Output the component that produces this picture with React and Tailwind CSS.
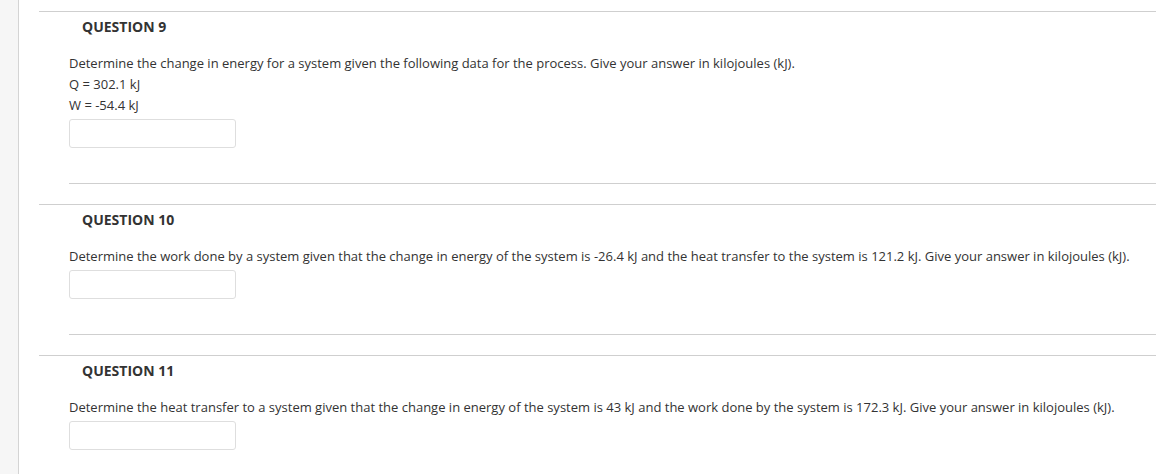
const questions = [
  {
    n: 9,
    lines: [
      'Determine the change in energy for a system given the following data for the process. Give your answer in kilojoules (kJ).',
      'Q = 302.1 kJ',
      'W = -54.4 kJ',
    ],
  },
  {
    n: 10,
    lines: [
      'Determine the work done by a system given that the change in energy of the system is -26.4 kJ and the heat transfer to the system is 121.2 kJ. Give your answer in kilojoules (kJ).',
    ],
  },
  {
    n: 11,
    lines: [
      'Determine the heat transfer to a system given that the change in energy of the system is 43 kJ and the work done by the system is 172.3 kJ. Give your answer in kilojoules (kJ).',
    ],
    last: true,
  },
]

function Question({ q }) {
  return (
    <div className="border-t border-[#cfcfcf]">
      <h3 className="pl-[43px] pt-[5px] text-[14px] leading-[20px] font-bold text-[#333]">QUESTION {q.n}</h3>
      <div className="pl-[30px] mt-[16px]">
        {q.lines.map(l => (
          <p key={l} className="text-[13px] leading-[21px] text-[#333] whitespace-nowrap">{l}</p>
        ))}
        <input type="text" className="mt-[3px] block w-[167px] h-[29px] border border-[#dedede] rounded-[3px] bg-white outline-none" />
        {!q.last && <div className="mt-[35px] border-t border-[#cfcfcf] mb-[20px]" />}
      </div>
    </div>
  )
}

export default function App() {
  return (
    <div className="flex min-h-screen bg-white overflow-hidden" style={{ fontFamily: '"Open Sans", sans-serif' }}>
      <div className="w-[19px] shrink-0 bg-[#f6f6f6] border-r border-[#d4d4d4]" />
      <div className="flex-1 pl-[20px] pt-[11px]">
        {questions.map(q => <Question key={q.n} q={q} />)}
      </div>
    </div>
  )
}
